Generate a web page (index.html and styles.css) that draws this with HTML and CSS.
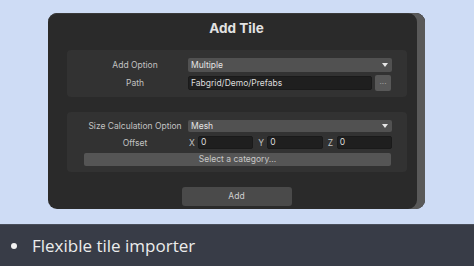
FILE: index.html
```html
<!DOCTYPE html>
<html>
<head>
<meta charset="utf-8">
<link rel="stylesheet" href="styles.css">
</head>
<body>
<div class="stage">
  <div class="window">
    <div class="title">Add Tile</div>
    <div class="panel panel-a">
      <div class="row">
        <div class="label">Add Option</div>
        <div class="dropdown"><span>Multiple</span><i class="arrow"></i></div>
      </div>
      <div class="row">
        <div class="label">Path</div>
        <div class="path">
          <div class="field">Fabgrid/Demo/Prefabs</div>
          <div class="dots">...</div>
        </div>
      </div>
    </div>
    <div class="panel panel-b">
      <div class="row">
        <div class="label">Size Calculation Option</div>
        <div class="dropdown small"><span>Mesh</span><i class="arrow"></i></div>
      </div>
      <div class="row">
        <div class="label">Offset</div>
        <div class="vec">
          <div class="axis"><span class="ax">X</span><div class="field">0</div></div>
          <div class="axis"><span class="ax">Y</span><div class="field">0</div></div>
          <div class="axis"><span class="ax">Z</span><div class="field">0</div></div>
        </div>
      </div>
      <div class="select">Select a category...</div>
    </div>
    <div class="add">Add</div>
  </div>
</div>
<div class="caption">
  <span class="bullet"></span>
  <span class="caption-text">Flexible tile importer</span>
</div>
</body>
</html>
```
FILE: styles.css
```css
html, body {
  margin: 0;
  padding: 0;
}
body {
  width: 474px;
  height: 266px;
  overflow: hidden;
  background: #cedcf5;
  font-family: Inter, "Noto Sans", sans-serif;
}
.stage {
  height: 224px;
  padding-top: 13px;
  padding-left: 48px;
  box-sizing: border-box;
}
.window {
  width: 377px;
  height: 196px;
  box-sizing: border-box;
  background: #2a2a2a;
  border-radius: 9px;
  box-shadow: inset -8px 0 0 #595959, inset 0 1px 0 #3a3a3a;
  display: flex;
  flex-direction: column;
  align-items: stretch;
}
.title {
  margin-top: 7px;
  height: 16px;
  line-height: 16px;
  text-align: center;
  font-size: 13.5px;
  font-weight: 700;
  color: #e2e2e2;
}
.panel {
  margin: 0 18px 0 19px;
  background: #323232;
  border-radius: 4px;
  padding: 0 15px;
  display: flex;
  flex-direction: column;
}
.panel-a {
  margin-top: 14px;
  padding-top: 8px;
  height: 47px;
  box-sizing: border-box;
  gap: 3px;
}
.panel-b {
  margin-top: 15px;
  padding-top: 8px;
  height: 60px;
  box-sizing: border-box;
  gap: 4px;
}
.row {
  display: flex;
  align-items: center;
}
.label {
  width: 106px;
  text-align: center;
  font-size: 8.5px;
  color: #c2c2c2;
  white-space: nowrap;
}
.dropdown {
  flex: 1;
  height: 14px;
  background: #515151;
  border-radius: 2px;
  display: flex;
  align-items: center;
  justify-content: space-between;
  padding: 0 4px 0 3px;
  font-size: 8.5px;
  color: #e4e4e4;
}
.dropdown.small {
  height: 12px;
}
.arrow {
  width: 0;
  height: 0;
  border-left: 3px solid transparent;
  border-right: 3px solid transparent;
  border-top: 4px solid #e6e6e6;
}
.path {
  flex: 1;
  display: flex;
  align-items: center;
  gap: 3px;
}
.field {
  flex: 1;
  height: 14px;
  line-height: 14px;
  box-sizing: border-box;
  background: #1f1f1f;
  border: 1px solid #1a1a1a;
  border-radius: 2px;
  padding-left: 2px;
  font-size: 8.5px;
  color: #dcdcdc;
  white-space: nowrap;
  overflow: hidden;
}
.path .field {
  line-height: 12px;
}
.dots {
  width: 16px;
  height: 16px;
  line-height: 13px;
  background: #585858;
  border-radius: 2px;
  text-align: center;
  font-size: 8px;
  color: #a8a8a8;
  margin-right: 1px;
}
.vec {
  flex: 1;
  display: grid;
  grid-template-columns: 1fr 1fr 1fr;
  gap: 4px;
}
.axis {
  display: flex;
  align-items: center;
}
.ax {
  width: 9px;
  padding-left: 1px;
  font-size: 8.5px;
  color: #c2c2c2;
}
.axis .field {
  height: 13px;
  line-height: 11px;
}
.select {
  margin: 0 1px 0 2px;
  height: 13px;
  line-height: 13px;
  background: #555555;
  border-radius: 2px;
  text-align: center;
  font-size: 8.5px;
  color: #c8c8c8;
}
.add {
  align-self: center;
  margin-top: 15px;
  width: 110px;
  height: 19px;
  line-height: 19px;
  background: #4a4a4a;
  border-radius: 3px;
  text-align: center;
  font-size: 8.5px;
  color: #cfcfcf;
}
.caption {
  height: 42px;
  background: #383c47;
  border-top: 1px solid #4a4f5b;
  box-sizing: border-box;
  display: flex;
  align-items: center;
  padding-left: 11px;
}
.bullet {
  width: 6px;
  height: 6px;
  border-radius: 50%;
  background: #f2f2f2;
  margin-right: 15px;
}
.caption-text {
  font-family: "Open Sans", sans-serif;
  font-size: 17px;
  color: #ececec;
  letter-spacing: 0;
}
```
